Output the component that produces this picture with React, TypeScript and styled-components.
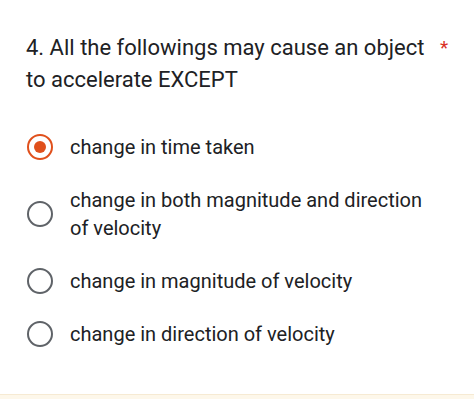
import styled, { createGlobalStyle } from "styled-components";

const GlobalStyle = createGlobalStyle`
  html, body {
    margin: 0;
    padding: 0;
    background: #fdf7ea;
  }
  body {
    font-family: Roboto, "Liberation Sans", sans-serif;
    font-weight: 400;
    color: #202124;
  }
`;

interface Option {
  label: string;
  checked?: boolean;
}

const options: Option[] = [
  { label: "change in time taken", checked: true },
  { label: "change in both magnitude and direction of velocity" },
  { label: "change in magnitude of velocity" },
  { label: "change in direction of velocity" },
];

function App() {
  return (
    <>
      <GlobalStyle />
      <Card>
        <Question>
          <QuestionText>
            4. All the followings may cause an object to accelerate EXCEPT
          </QuestionText>
          <Required>*</Required>
        </Question>

        <OptionList>
          {options.map((opt) => (
            <OptionRow key={opt.label}>
              <Radio $checked={!!opt.checked} />
              <OptionLabel>{opt.label}</OptionLabel>
            </OptionRow>
          ))}
        </OptionList>
      </Card>
      <Footer />
    </>
  );
}

const Card = styled.div`
  background: #fff;
  height: 395px;
  box-sizing: border-box;
  padding: 32px 0 0 26px;
  border-bottom: 1px solid #f6ead3;
`;

const Question = styled.div`
  display: flex;
  align-items: flex-start;
  gap: 12px;
`;

const QuestionText = styled.div`
  font-size: 22px;
  line-height: 32px;
  width: 402px;
`;

const Required = styled.span`
  color: #d93025;
  font-size: 19px;
  line-height: 32px;
`;

const OptionList = styled.div`
  display: flex;
  flex-direction: column;
  gap: 25px;
  margin-top: 37px;
`;

const OptionRow = styled.div`
  display: flex;
  align-items: center;
  gap: 17px;
`;

const Radio = styled.span<{ $checked: boolean }>`
  flex: none;
  width: 26px;
  height: 26px;
  box-sizing: border-box;
  border-radius: 50%;
  border: 2.5px solid ${(p) => (p.$checked ? "#e0501c" : "#5f6368")};
  display: flex;
  align-items: center;
  justify-content: center;
  margin-left: 1px;

  &::after {
    content: "";
    display: ${(p) => (p.$checked ? "block" : "none")};
    width: 12px;
    height: 12px;
    border-radius: 50%;
    background: #e0501c;
  }
`;

const OptionLabel = styled.div`
  font-size: 20px;
  line-height: 28px;
  max-width: 360px;
`;

const Footer = styled.div`
  height: 4px;
  background: #fdf7ea;
`;

export default App;
